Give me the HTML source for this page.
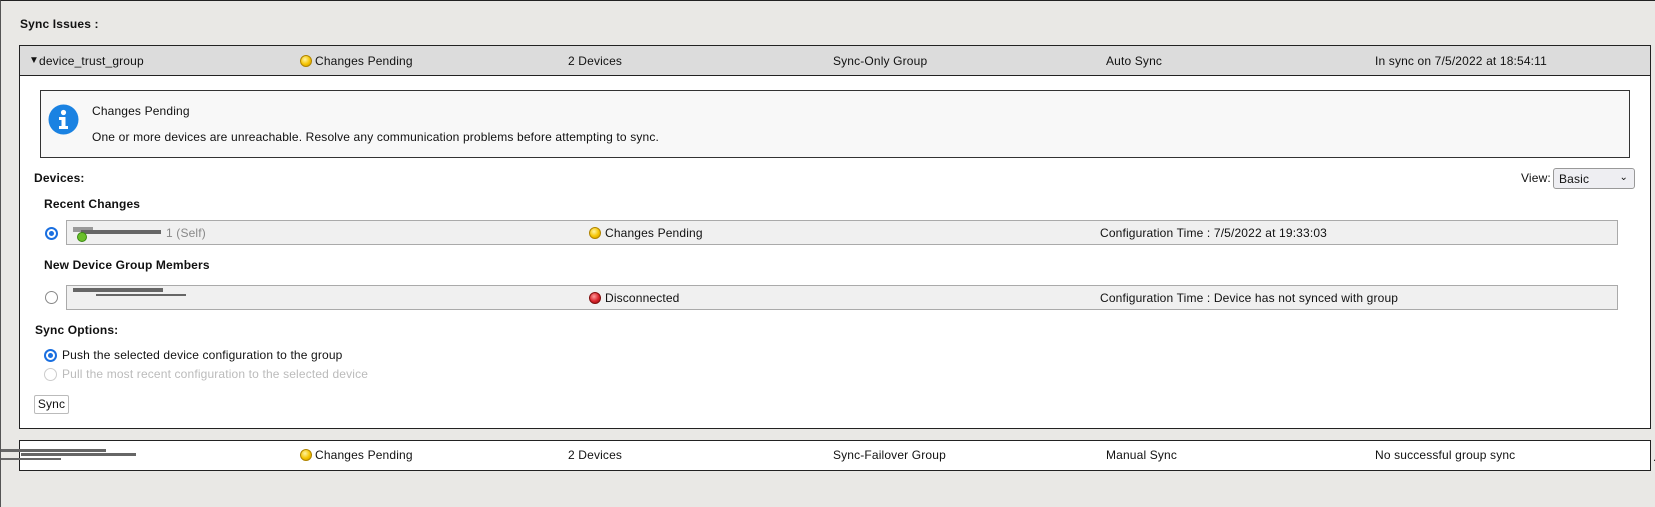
<!DOCTYPE html>
<html><head><meta charset="utf-8"><style>
*{margin:0;padding:0;box-sizing:border-box}
body{width:1655px;height:507px;background:#e9e8e5;font-family:"Liberation Sans",Arial,sans-serif;font-size:12px;letter-spacing:0.15px;color:#111;position:relative;overflow:hidden;border-top:1px solid #222;border-left:1px solid #555}
.a{position:absolute;white-space:nowrap;line-height:14px}
.b{font-weight:bold}
.box{position:absolute;border:1px solid #222;background:#fff}
.dot{position:absolute;width:12px;height:12px;border-radius:50%}
.y{background:radial-gradient(circle at 40% 35%,#fff3a0,#f5c400 55%,#c89400);border:1px solid #b08400}
.r{background:radial-gradient(circle at 40% 35%,#ff9a9a,#d8222a 55%,#901010);border:1px solid #801010}
.row{position:absolute;left:65px;width:1552px;height:25px;background:#f0f0f0;border:1px solid #aaa}
.rad{position:absolute;width:13px;height:13px;border-radius:50%;border:1px solid #888;background:#fff}
.rad.on{border:2px solid #1a6fe0}
.rad.on:after{content:"";position:absolute;left:2px;top:2px;width:5px;height:5px;border-radius:50%;background:#1a6fe0}
.red{position:absolute;height:2px;background:#666}
</style></head><body>
<div class="a b" style="left:19px;top:16px">Sync Issues :</div>

<div class="box" style="left:18px;top:44px;width:1632px;height:384px"></div>
<div class="a" style="left:19px;top:45px;width:1630px;height:30px;background:#dcdcdc;border-bottom:1px solid #222"></div>
<div class="a" style="left:28px;top:53px;font-size:10px">▼</div>
<div class="a" style="left:38px;top:53px">device_trust_group</div>
<div class="dot y" style="left:299px;top:54px"></div>
<div class="a" style="left:314px;top:53px">Changes Pending</div>
<div class="a" style="left:567px;top:53px">2 Devices</div>
<div class="a" style="left:832px;top:53px">Sync-Only Group</div>
<div class="a" style="left:1105px;top:53px">Auto Sync</div>
<div class="a" style="left:1374px;top:53px">In sync on 7/5/2022 at 18:54:11</div>

<div class="a" style="left:39px;top:89px;width:1590px;height:68px;background:#f8f8f8;border:1px solid #333"></div>
<svg class="a" style="left:47px;top:103px" width="31" height="31" viewBox="0 0 31 31"><circle cx="15.5" cy="15.5" r="15" fill="#1a82e2"/><circle cx="15.5" cy="8.5" r="2.6" fill="#fff"/><path d="M11 13h6.5v9H20v3h-9v-3h2.5v-6H11z" fill="#fff"/></svg>
<div class="a" style="left:91px;top:103px">Changes Pending</div>
<div class="a" style="left:91px;top:129px">One or more devices are unreachable. Resolve any communication problems before attempting to sync.</div>

<div class="a b" style="left:33px;top:170px">Devices:</div>
<div class="a" style="left:1520px;top:170px">View:</div>
<div class="a" style="left:1552px;top:167px;width:82px;height:21px;border:1px solid #999;border-radius:3px;background:#eeeef2;padding:3px 5px;line-height:14px">Basic<span style="position:absolute;right:6px;top:2px;font-size:10px">&#8964;</span></div>

<div class="a b" style="left:43px;top:196px">Recent Changes</div>
<div class="rad on" style="left:44px;top:226px"></div>
<div class="row" style="top:219px"></div>
<div class="red" style="left:72px;top:226px;width:20px;height:5px;background:#999"></div>
<div class="red" style="left:80px;top:229px;width:80px;height:4px"></div>
<div class="a" style="left:165px;top:225px;color:#888">1 (Self)</div>
<div class="dot" style="left:76px;top:231px;width:10px;height:10px;background:#6abf2a;border:1px solid #3a8a10"></div>
<div class="dot y" style="left:588px;top:226px"></div>
<div class="a" style="left:604px;top:225px">Changes Pending</div>
<div class="a" style="left:1099px;top:225px">Configuration Time : 7/5/2022 at 19:33:03</div>

<div class="a b" style="left:43px;top:257px">New Device Group Members</div>
<div class="rad" style="left:44px;top:290px"></div>
<div class="row" style="top:284px"></div>
<div class="red" style="left:72px;top:287px;width:90px;height:4px"></div>
<div class="red" style="left:95px;top:293px;width:90px;height:2px"></div>
<div class="dot r" style="left:588px;top:291px"></div>
<div class="a" style="left:604px;top:290px">Disconnected</div>
<div class="a" style="left:1099px;top:290px">Configuration Time : Device has not synced with group</div>

<div class="a b" style="left:34px;top:322px">Sync Options:</div>
<div class="rad on" style="left:43px;top:348px"></div>
<div class="a" style="left:61px;top:347px">Push the selected device configuration to the group</div>
<div class="rad" style="left:43px;top:367px;border-color:#ccc"></div>
<div class="a" style="left:61px;top:366px;color:#bbb">Pull the most recent configuration to the selected device</div>
<div class="a" style="left:33px;top:394px;width:35px;height:19px;border:1px solid #bbb;border-radius:2px;background:#fff;text-align:center;line-height:17px">Sync</div>

<div class="box" style="left:18px;top:439px;width:1632px;height:31px"></div>
<div class="red" style="left:0px;top:448px;width:105px;height:3px"></div>
<div class="red" style="left:20px;top:452px;width:115px;height:3px"></div>
<div class="red" style="left:0px;top:457px;width:60px;height:2px"></div>
<div class="dot y" style="left:299px;top:448px"></div>
<div class="a" style="left:314px;top:447px">Changes Pending</div>
<div class="a" style="left:567px;top:447px">2 Devices</div>
<div class="a" style="left:832px;top:447px">Sync-Failover Group</div>
<div class="a" style="left:1105px;top:447px">Manual Sync</div>
<div class="a" style="left:1374px;top:447px">No successful group sync</div>
<div class="a" style="left:1652px;top:449px">.</div>
</body></html>
